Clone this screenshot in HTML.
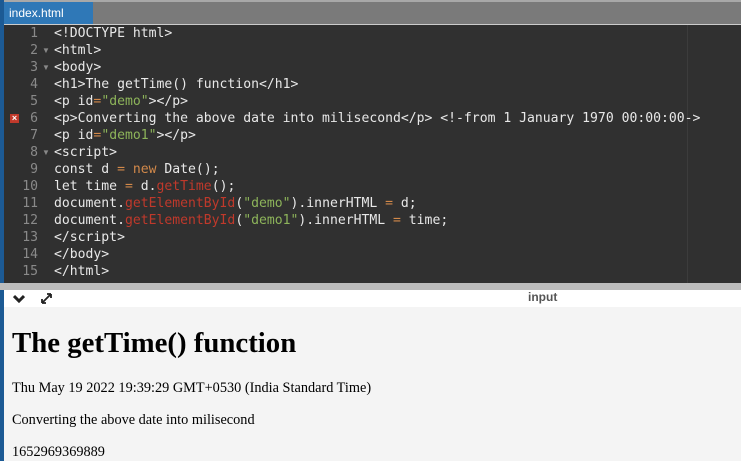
<!DOCTYPE html>
<html><head><style>
body{margin:0;width:741px;height:461px;overflow:hidden;background:#f4f4f4;position:relative;font-family:"Liberation Sans",sans-serif}
#top{position:absolute;left:0;top:0;width:741px;height:2px;background:#a8a8a8}
#tabbar{position:absolute;left:0;top:2px;width:741px;height:22px;background:#7a7a7a;border-bottom:1px solid #ccc}
#tab{position:absolute;left:4px;top:0;width:89px;height:22px;background:#2f78b7;color:#fff;font-size:12px;line-height:22px;padding-left:5px;box-sizing:border-box}
#leftstrip{position:absolute;left:0;top:0;width:4px;height:461px;background:#1c5a94}
#editor{position:absolute;left:4px;top:25px;width:737px;height:258px;background:#303030}
#gutter{position:absolute;left:0;top:0;width:46px;height:258px;background:#2f2f2f}
.ln{position:absolute;left:0;width:34px;text-align:right;color:#8a8a8a;font:13.1px "DejaVu Sans Mono",monospace;height:17px;line-height:17px}
.fold{position:absolute;left:38px;color:#888;font-size:8px;line-height:17px}
.code{position:absolute;left:50px;color:#e8e8e8;font:13.1px "DejaVu Sans Mono",monospace;white-space:pre;height:17px;line-height:17px}
.s{color:#8db45a}.o{color:#d2894a}.f{color:#c0392b}
#margin{position:absolute;left:683px;top:0;width:1px;height:258px;background:#3c3c3c}
#err{position:absolute;left:6px;top:89px;width:9px;height:9px;background:#c0392b;color:#fff;font-size:9px;line-height:9px;text-align:center;font-weight:bold}
#gray{position:absolute;left:0;top:283px;width:741px;height:7px;background:#bcbcbc}
#bar{position:absolute;left:4px;top:290px;width:737px;height:17px;background:#fff}
#input{position:absolute;left:524px;top:0;font-size:12px;color:#555;line-height:14px;font-weight:bold;font-family:"Liberation Sans Narrow","Liberation Sans",sans-serif}
h1{position:absolute;left:12px;top:327px;margin:0;font:bold 28.8px "Liberation Serif",serif;color:#000}
.p{position:absolute;left:12px;font:14.3px "Liberation Serif",serif;color:#000;margin:0}
</style></head><body>
<div id="top"></div>
<div id="tabbar"><div id="tab">index.html</div></div>
<div id="leftstrip"></div>
<div id="editor">
<div id="gutter"></div>
<div id="margin"></div>
<div class="ln" style="top:0">1</div>
<div class="ln" style="top:17px">2</div><div class="fold" style="top:17px">▼</div>
<div class="ln" style="top:34px">3</div><div class="fold" style="top:34px">▼</div>
<div class="ln" style="top:51px">4</div>
<div class="ln" style="top:68px">5</div>
<div id="err">×</div><div class="ln" style="top:85px">6</div>
<div class="ln" style="top:102px">7</div>
<div class="ln" style="top:119px">8</div><div class="fold" style="top:119px">▼</div>
<div class="ln" style="top:136px">9</div>
<div class="ln" style="top:153px">10</div>
<div class="ln" style="top:170px">11</div>
<div class="ln" style="top:187px">12</div>
<div class="ln" style="top:204px">13</div>
<div class="ln" style="top:221px">14</div>
<div class="ln" style="top:238px">15</div>
<div class="code" style="top:0">&lt;!DOCTYPE html&gt;</div>
<div class="code" style="top:17px">&lt;html&gt;</div>
<div class="code" style="top:34px">&lt;body&gt;</div>
<div class="code" style="top:51px">&lt;h1&gt;The getTime() function&lt;/h1&gt;</div>
<div class="code" style="top:68px">&lt;p id<span class="o">=</span><span class="s">"demo"</span>&gt;&lt;/p&gt;</div>
<div class="code" style="top:85px">&lt;p&gt;Converting the above date into milisecond&lt;/p&gt; &lt;!-from 1 January 1970 00:00:00-&gt;</div>
<div class="code" style="top:102px">&lt;p id<span class="o">=</span><span class="s">"demo1"</span>&gt;&lt;/p&gt;</div>
<div class="code" style="top:119px">&lt;script&gt;</div>
<div class="code" style="top:136px">const d <span class="o">=</span> <span class="o">new</span> Date();</div>
<div class="code" style="top:153px">let time <span class="o">=</span> d.<span class="f">getTime</span>();</div>
<div class="code" style="top:170px">document.<span class="f">getElementById</span>(<span class="s">"demo"</span>).innerHTML <span class="o">=</span> d;</div>
<div class="code" style="top:187px">document.<span class="f">getElementById</span>(<span class="s">"demo1"</span>).innerHTML <span class="o">=</span> time;</div>
<div class="code" style="top:204px">&lt;/script&gt;</div>
<div class="code" style="top:221px">&lt;/body&gt;</div>
<div class="code" style="top:238px">&lt;/html&gt;</div>
</div>
<div id="gray"></div>
<div id="bar">
<svg style="position:absolute;left:9px;top:4px" width="12" height="9"><path d="M1 2 L6 7 L11 2" stroke="#222" stroke-width="3" fill="none"/></svg>
<svg style="position:absolute;left:36px;top:2px" width="13" height="13"><path d="M2 11 L11 2 M2 11 L2 7 M2 11 L6 11 M11 2 L7 2 M11 2 L11 6" stroke="#222" stroke-width="1.8" fill="none"/></svg>
<div id="input">input</div>
</div>
<h1>The getTime() function</h1>
<div class="p" style="top:380px">Thu May 19 2022 19:39:29 GMT+0530 (India Standard Time)</div>
<div class="p" style="top:412px">Converting the above date into milisecond</div>
<div class="p" style="top:444px">1652969369889</div>
</body></html>
